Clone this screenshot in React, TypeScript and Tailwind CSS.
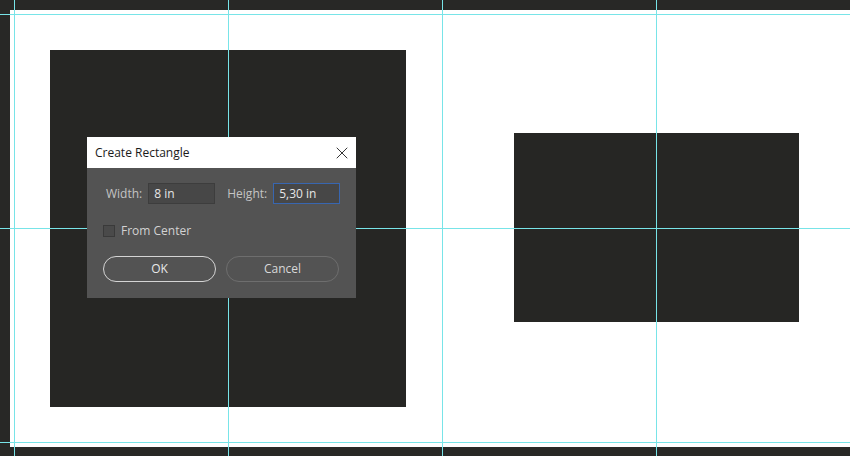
import { X } from 'lucide-react';

const V_GUIDES = ['left-[14px]', 'left-[228px]', 'left-[442px]', 'left-[656px]'];
const H_GUIDES = ['top-[14px]', 'top-[228px]', 'top-[442px]'];

function Field({ label, value, focused }: { label: string; value: string; focused?: boolean }) {
  return (
    <label className="flex items-center gap-[6px]">
      <span className="text-[12px] text-[#c4c4c4]">{label}</span>
      <span
        className={`flex h-[21px] w-[67px] items-center border px-[5px] text-[12px] text-[#e6e6e6] bg-[#474747] ${
          focused ? 'border-[#3866b0]' : 'border-[#3d3d3d]'
        }`}
      >
        {value}
      </span>
    </label>
  );
}

function CreateRectangleDialog() {
  return (
    <div className="absolute left-[87px] top-[137px] w-[269px] h-[161px] bg-[#535353] font-['Open_Sans','Liberation_Sans',sans-serif]">
      {/* Title bar */}
      <div className="flex h-[31px] items-center justify-between bg-white pl-[8px] pr-[4px]">
        <span className="text-[12px] text-[#1a1a1a]">Create Rectangle</span>
        <X className="w-[20px] h-[20px] text-[#222]" strokeWidth={1.1} />
      </div>

      <div className="px-[16px] pt-[15px]">
        <div className="flex items-center gap-[12px] pl-[3px]">
          <Field label="Width:" value="8 in" />
          <Field label="Height:" value="5,30 in" focused />
        </div>

        <div className="mt-[18px] flex items-center gap-[6px]">
          <span className="h-[12px] w-[12px] border border-[#3a3a3a] bg-[#4a4a4a]" />
          <span className="text-[12px] text-[#d2d2d2]">From Center</span>
        </div>

        <div className="mt-[16px] flex gap-[10px]">
          <button
            type="button"
            className="h-[26px] w-[113px] rounded-full border-[1.5px] border-[#d4d4d4] text-[12px] text-[#e8e8e8]"
          >
            OK
          </button>
          <button
            type="button"
            className="h-[26px] w-[113px] rounded-full border border-[#6e6e6e] text-[12px] text-[#d8d8d8]"
          >
            Cancel
          </button>
        </div>
      </div>
    </div>
  );
}

export default function App() {
  return (
    <div className="relative w-[850px] h-[456px] overflow-hidden bg-[#282826]">
      {/* Artboard */}
      <div className="absolute left-[10px] top-[10px] right-0 bottom-[9px] bg-white" />

      {/* Shapes */}
      <div className="absolute left-[50px] top-[50px] w-[356px] h-[357px] bg-[#262624]" />
      <div className="absolute left-[514px] top-[133px] w-[285px] h-[189px] bg-[#262624]" />

      {/* Guides */}
      {V_GUIDES.map((cls) => (
        <div key={cls} className={`absolute top-0 bottom-0 w-px bg-[#78e4e8] ${cls}`} />
      ))}
      {H_GUIDES.map((cls) => (
        <div key={cls} className={`absolute left-0 right-0 h-px bg-[#78e4e8] ${cls}`} />
      ))}

      <CreateRectangleDialog />
    </div>
  );
}
